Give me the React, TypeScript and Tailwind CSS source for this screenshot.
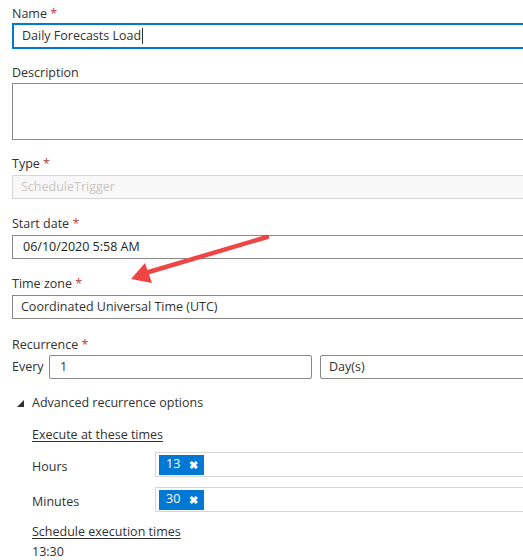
import React from 'react'

function Label({ text, required }: { text: string; required?: boolean }) {
  return (
    <div className="h-5 leading-5 text-[12.5px] text-[#323130]">
      {text}
      {required && <span className="text-[#b3444a]"> *</span>}
    </div>
  )
}

function Chip({ value }: { value: string }) {
  return (
    <span className="flex items-center h-5 w-[45px] bg-[#0078d4] text-white text-[12.5px] pl-[7px]">
      <span>{value}</span>
      <span className="ml-[9px] text-[11px] font-bold leading-none">✖</span>
    </span>
  )
}

export default function App() {
  return (
    <div
      className="relative w-[523px] h-[560px] overflow-hidden bg-white pl-3 pt-[4px]"
      style={{ fontFamily: '"Open Sans", "Noto Sans", sans-serif' }}
    >
      {/* Name */}
      <Label text="Name" required />
      <div className="-mt-px w-[540px] h-[26px] border-2 border-[#0078d4] flex items-center pl-[8px] text-[12.5px] text-[#323130]">
        Daily Forecasts Load
        <span className="inline-block w-px h-[16px] bg-[#323130] ml-px" />
      </div>

      {/* Description */}
      <div className="mt-[14px]">
        <Label text="Description" />
        <div className="w-[540px] h-[57px] border border-[#8a8886]" />
      </div>

      {/* Type */}
      <div className="mt-[14px]">
        <Label text="Type" required />
        <div className="mt-px w-[540px] h-6 border border-[#d6d6d6] bg-[#f8f8f8] flex items-center pl-[8px] text-[12.5px] text-[#c8c6c4]">
          ScheduleTrigger
        </div>
      </div>

      {/* Start date */}
      <div className="mt-[15px]">
        <Label text="Start date" required />
        <div className="mt-px w-[540px] h-6 border border-[#8a8886] flex items-center pl-[10px] text-[12.5px] text-[#201f1e]">
          06/10/2020 5:58 AM
        </div>
      </div>

      {/* Time zone */}
      <div className="mt-[15px]">
        <Label text="Time zone" required />
        <div className="mt-px w-[540px] h-6 border border-[#8a8886] flex items-center pl-[8px] text-[12.5px] text-[#323130]">
          Coordinated Universal Time (UTC)
        </div>
      </div>

      {/* Recurrence */}
      <div className="mt-[16px]">
        <Label text="Recurrence" required />
        <div className="flex items-center">
          <span className="shrink-0 w-[37px] text-[12.5px] text-[#323130]">Every</span>
          <div className="shrink-0 w-[263px] h-6 border border-[#8a8886] rounded-[2px] flex items-center pl-[10px] text-[12.5px] text-[#323130]">
            1
          </div>
          <div className="shrink-0 ml-[8px] w-[220px] h-6 border border-[#8a8886] rounded-[2px] flex items-center pl-[8px] text-[12.5px] text-[#323130]">
            Day(s)
          </div>
        </div>
      </div>

      {/* Advanced */}
      <div className="mt-[14px] flex items-center h-5">
        <svg width="7" height="7" viewBox="0 0 7 7" className="shrink-0 ml-[5px] mr-[8px]">
          <polygon points="7,0 7,7 0,7" fill="#323130" />
        </svg>
        <span className="text-[12.5px] text-[#323130]">Advanced recurrence options</span>
      </div>

      <div className="pl-5">
        <div className="mt-[12px] h-5 leading-5 text-[12.5px] text-[#323130] underline underline-offset-2">
          Execute at these times
        </div>

        <div className="mt-[7px] flex">
          <span className="shrink-0 w-[123px] pt-[5px] text-[12.5px] leading-5 text-[#323130]">Hours</span>
          <div className="shrink-0 w-[380px] h-[25px] border border-[#d6d6d6] flex items-center pl-[3px]">
            <Chip value="13" />
          </div>
        </div>

        <div className="mt-[10px] flex">
          <span className="shrink-0 w-[123px] pt-[5px] text-[12.5px] leading-5 text-[#323130]">Minutes</span>
          <div className="shrink-0 w-[380px] h-[25px] border border-[#d6d6d6] flex items-center pl-[3px]">
            <Chip value="30" />
          </div>
        </div>

        <div className="mt-[10px] h-5 leading-5 text-[12.5px] text-[#323130] underline underline-offset-2">
          Schedule execution times
        </div>
        <div className="h-5 leading-5 text-[12.5px] text-[#323130]">13:30</div>
      </div>

      {/* Annotation arrow */}
      <svg className="absolute left-0 top-0 pointer-events-none" width="523" height="560">
        <line x1="267" y1="237" x2="142" y2="274" stroke="#f04545" strokeWidth="4.5" strokeLinecap="round" />
        <polygon points="131,279 145,263 152,283" fill="#f04545" />
      </svg>
    </div>
  )
}
